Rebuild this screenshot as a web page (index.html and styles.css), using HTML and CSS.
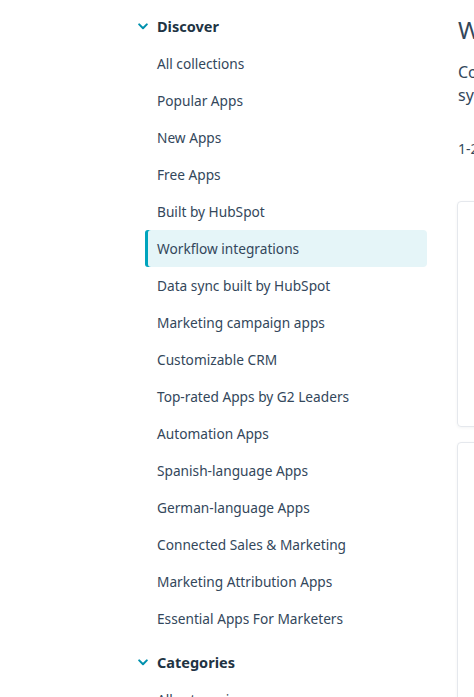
FILE: index.html
```html
<!DOCTYPE html>
<html lang="en">
<head>
  <meta charset="UTF-8" />
  <meta name="viewport" content="width=device-width, initial-scale=1.0" />
  <title>App Marketplace - Workflow integrations</title>
  <link rel="stylesheet" href="styles.css">
</head>
<body>
  <div class="page">
    <nav class="sidebar">
      <div class="section">
        <div class="section-title">
          <svg class="chevron" width="10" height="7" viewBox="0 0 10 7"><path d="M1.2 1.4 L5 5.2 L8.8 1.4" /></svg>
          Discover
        </div>
        <ul class="links">
          <li>All collections</li>
          <li>Popular Apps</li>
          <li>New Apps</li>
          <li>Free Apps</li>
          <li>Built by HubSpot</li>
          <li class="active">Workflow integrations</li>
          <li>Data sync built by HubSpot</li>
          <li>Marketing campaign apps</li>
          <li>Customizable CRM</li>
          <li>Top-rated Apps by G2 Leaders</li>
          <li>Automation Apps</li>
          <li>Spanish-language Apps</li>
          <li>German-language Apps</li>
          <li>Connected Sales &amp; Marketing</li>
          <li>Marketing Attribution Apps</li>
          <li>Essential Apps For Marketers</li>
        </ul>
      </div>
      <div class="section">
        <div class="section-title">
          <svg class="chevron" width="10" height="7" viewBox="0 0 10 7"><path d="M1.2 1.4 L5 5.2 L8.8 1.4" /></svg>
          Categories
        </div>
        <ul class="links">
          <li>All categories</li>
        </ul>
      </div>
    </nav>

    <main class="content">
      <h1>Workflow integrations</h1>
      <p class="intro">Connect HubSpot workflows with the apps you use every day<br>sync data and automate tasks across your tools.</p>
      <div class="count">1-24 of 120 results</div>
      <div class="card"></div>
      <div class="card"></div>
    </main>
  </div>
</body>
</html>
```

FILE: styles.css
```css
body {
  margin: 0;
  background: #fff;
  color: #33475b;
  font-family: "Noto Sans", sans-serif;
  overflow: hidden;
}

.page {
  display: flex;
  gap: 31px;
  padding-left: 137px;
  width: 1000px;
}

.sidebar {
  width: 290px;
  flex-shrink: 0;
  padding-top: 8px;
}

.section {
  margin-bottom: 7px;
}

.section-title {
  display: flex;
  align-items: center;
  gap: 9px;
  height: 36px;
  padding-left: 1px;
  padding-bottom: 1px;
  font-size: 14.5px;
  font-weight: 700;
  color: #213343;
}

.chevron path {
  fill: none;
  stroke: #0091ae;
  stroke-width: 2;
  stroke-linecap: round;
  stroke-linejoin: round;
}

.links {
  list-style: none;
  margin: 0;
  padding: 0 0 0 8px;
}

.links li {
  height: 37px;
  line-height: 38px;
  padding-left: 12px;
  font-size: 13.7px;
  border-radius: 0 4px 4px 0;
  white-space: nowrap;
}

.links li.active {
  background: #e5f5f8;
  box-shadow: inset 3px 0 0 #00a4bd;
  border-radius: 3px 4px 4px 3px;
}

.content {
  width: 520px;
  flex-shrink: 0;
}

.content h1 {
  margin: 14px 0 0;
  font-size: 24px;
  font-weight: 400;
  line-height: 32px;
  color: #33475b;
}

.intro {
  margin: 15px 0 0;
  font-size: 16px;
  line-height: 23px;
}

.count {
  margin-top: 32px;
  font-size: 14px;
  line-height: 20px;
}

.card {
  margin-top: 42px;
  margin-left: -1px;
  height: 224px;
  border: 1px solid #e5e8ed;
  border-radius: 4px;
  box-shadow: 0 1px 3px rgba(45, 62, 80, 0.06);
}

.card + .card {
  margin-top: 15px;
  height: 400px;
}
```
